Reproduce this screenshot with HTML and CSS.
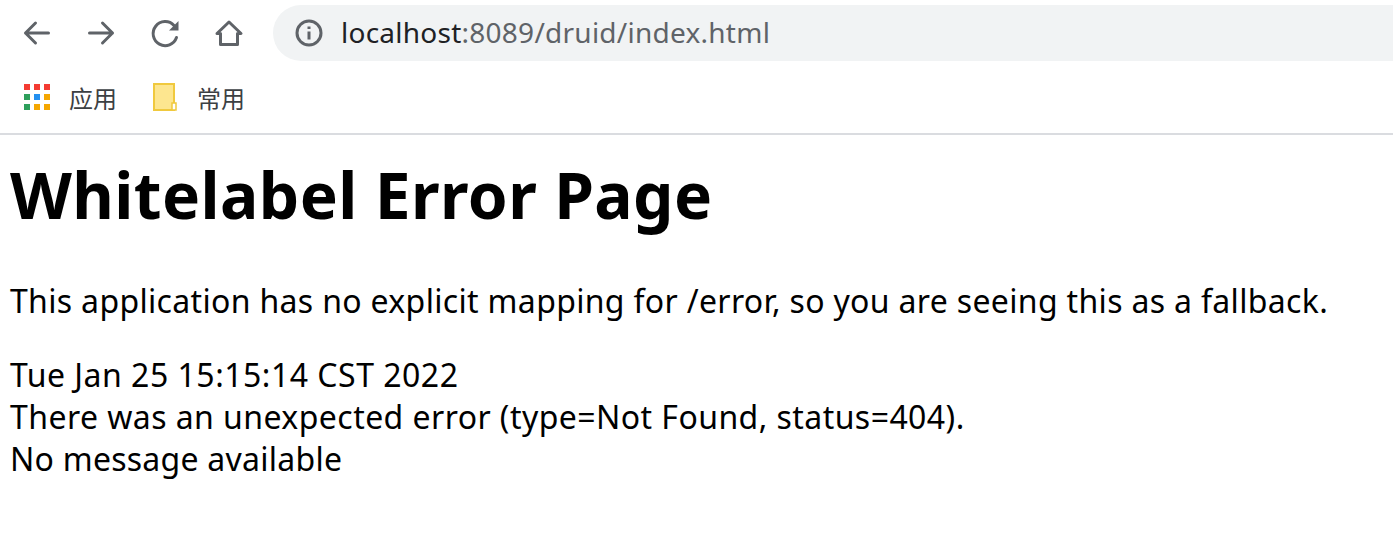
FILE: index.html
```html
<!DOCTYPE html>
<html lang="en">
<head>
  <meta charset="UTF-8">
  <title>Whitelabel Error Page</title>
  <link rel="stylesheet" href="styles.css">
</head>
<body>

  <!-- Browser toolbar -->
  <div class="toolbar">
    <svg class="nav-icon" viewBox="0 0 32 32"><path d="M27.500 16H4.500M14.500 6L4.500 16l10 10"/></svg>
    <svg class="nav-icon" viewBox="0 0 32 32"><path d="M4.500 16h23M17.500 6l10 10-10 10"/></svg>
    <svg class="nav-icon" viewBox="0 0 32 32"><path d="M27.500 20.500A12 12 0 1 1 25 8.500"/><path class="solid" d="M20 13.500L29.500 4v9.500z"/></svg>
    <svg class="nav-icon" viewBox="0 0 32 32"><path d="M4 16.500L16 5l12 11.500H24.500v11h-17v-11z"/></svg>
    <div class="address">
      <svg class="info-icon" viewBox="0 0 28 28"><circle cx="14" cy="14" r="12"/><path d="M14 12.500v8M14 7.500v2.500"/></svg>
      <span class="host">localhost</span><span class="path">:8089/druid/index.html</span>
    </div>
  </div>

  <!-- Bookmarks -->
  <div class="bookmarks">
    <div class="bookmark">
      <div class="apps">
        <i class="red"></i><i class="red"></i><i class="red"></i>
        <i class="green"></i><i class="blue"></i><i class="orange"></i>
        <i class="green"></i><i class="orange"></i><i class="orange"></i>
      </div>
      <span>应用</span>
    </div>
    <div class="bookmark">
      <svg class="folder" viewBox="0 0 24 28"><path class="sheet" d="M1 1h20v26H1z"/><path class="tab" d="M19 20h4v7h-4z"/></svg>
      <span>常用</span>
    </div>
  </div>

  <!-- Page content -->
  <div class="content">
    <h1>Whitelabel Error Page</h1>
    <p>This application has no explicit mapping for /error, so you are seeing this as a fallback.</p>
    <div class="date">Tue Jan 25 15:15:14 CST 2022</div>
    <div class="status">There was an unexpected error (type=Not Found, status=404).</div>
    <div class="message">No message available</div>
  </div>

</body>
</html>
```

FILE: styles.css
```css
* {
  box-sizing: border-box;
}

body {
  margin: 0;
  font-family: "Noto Sans", "Noto Sans CJK SC", sans-serif;
  background: white;
  color: black;
}

.toolbar {
  display: flex;
  align-items: center;
  height: 66px;
  padding-left: 21px;
}

.nav-icon {
  width: 32px;
  height: 32px;
  margin-right: 32px;
  fill: none;
  stroke: #5f6368;
  stroke-width: 3;
  stroke-linecap: round;
  stroke-linejoin: round;
}

.nav-icon .solid {
  fill: #5f6368;
  stroke: none;
}

.nav-icon:nth-child(4) {
  margin-right: 28px;
}

.address {
  display: flex;
  align-items: center;
  width: 1120px;
  height: 56px;
  padding-left: 22px;
  background: #f1f3f4;
  border-radius: 28px 0 0 28px;
  font-size: 28px;
  letter-spacing: 0.25px;
}

.address span {
  margin-bottom: 2px;
}

.info-icon {
  width: 28px;
  height: 28px;
  margin-right: 18px;
  fill: none;
  stroke: #5f6368;
  stroke-width: 3;
}

.host {
  color: #202124;
}

.path {
  color: #5f6368;
}

.bookmarks {
  display: flex;
  align-items: center;
  height: 69px;
  padding-left: 24px;
  padding-bottom: 5px;
  border-bottom: 2px solid #dadce0;
  font-size: 24px;
  color: #3c4043;
}

.bookmark {
  display: flex;
  align-items: center;
  margin-right: 36px;
}

.apps {
  display: grid;
  grid-template-columns: repeat(3, 6px);
  gap: 4px;
  margin-right: 19px;
}

.apps i {
  height: 6px;
}

.red { background: #f43b32; }
.green { background: #2e9f5b; }
.blue { background: #2390f0; }
.orange { background: #f5a700; }

.folder {
  width: 24px;
  height: 28px;
  margin-right: 20px;
}

.sheet {
  fill: #fde68f;
  stroke: #f0c93e;
  stroke-width: 2;
}

.tab {
  fill: white;
  stroke: #f0c93e;
  stroke-width: 1.500;
}

.content {
  padding: 0 10px;
  font-size: 32px;
  line-height: 42px;
  letter-spacing: 0.33px;
}

h1 {
  margin: 22px 0 0;
  font-size: 64px;
  line-height: 76px;
  font-weight: 700;
  letter-spacing: 0.4px;
}

p {
  margin: 47px 0 32px;
}

.date {
  letter-spacing: 0.5px;
}

.status {
  letter-spacing: 0.44px;
}

.message {
  letter-spacing: 0.25px;
}
```
